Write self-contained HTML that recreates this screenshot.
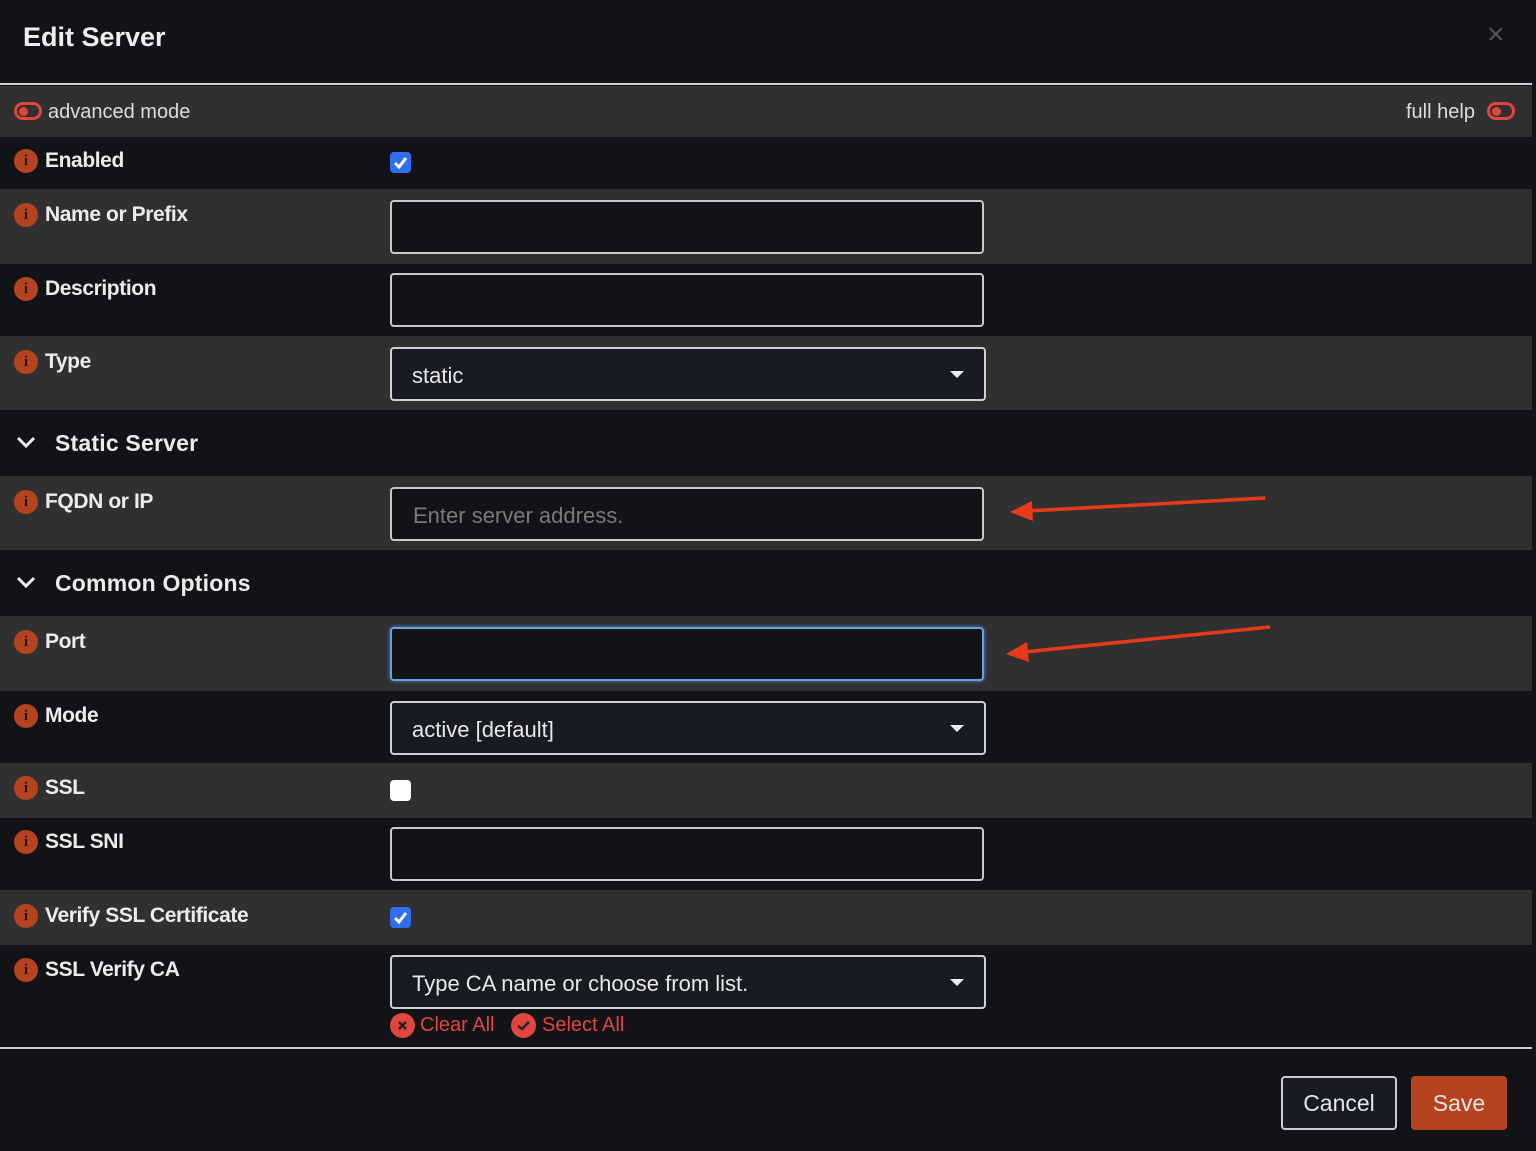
<!DOCTYPE html>
<html><head><meta charset="utf-8"><style>
*{box-sizing:border-box;margin:0;padding:0}
body{width:1536px;height:1151px;background:#121317;font-family:"Liberation Sans",sans-serif;color:#e6e6e6;position:relative;overflow:hidden}
.a{position:absolute}
.row{position:absolute;left:0;width:1532px}
.g{background:#303030}
.d{background:#121317}
.lbl{position:absolute;left:45px;font-size:21px;font-weight:bold;color:#ececec;letter-spacing:-0.4px;top:0}
.ic{position:absolute;left:14px;width:24px;height:24px;border-radius:50%;background:#b5431f;color:#2a1308;font:bold 15px "Liberation Serif",serif;text-align:center;line-height:24px}
.inp{position:absolute;left:390px;width:594px;height:54px;border:2px solid #c8c8c8;border-radius:4px;background:#121317}
.sel{position:absolute;left:390px;width:596px;height:54px;border:2px solid #d0d0d0;border-radius:4px;background:#181b22;font-size:22px;color:#e8e8e8;padding:14px 0 0 20px}
.sel:after{content:"";position:absolute;right:20px;top:22px;border-left:7px solid transparent;border-right:7px solid transparent;border-top:7px solid #eee}
.cb{position:absolute;left:390px;width:21px;height:21px;border-radius:4px;background:#2f6fed}
.cbw{background:#fff}
.sec{position:absolute;left:55px;font-size:23px;font-weight:bold;color:#ececec;letter-spacing:0.2px}
.tg{position:absolute;top:102px;width:28px;height:18px;border:3px solid #e0463e;border-radius:9px}
.tg div{position:absolute;left:2px;top:2px;width:9px;height:9px;border-radius:50%;background:#e0463e}
</style></head><body>
<div class="a" style="left:23px;top:22px;font-size:27px;font-weight:bold;color:#eee">Edit Server</div>
<div class="a" style="left:1487px;top:18px;font-size:30px;color:#555">×</div>
<div class="a" style="left:0;top:83px;width:1532px;height:2px;background:#ccc"></div>

<div class="row g" style="top:86px;height:51px"></div>
<div class="tg" style="left:14px"><div></div></div>
<div class="a" style="left:48px;top:101px;font-size:20px;color:#ddd">advanced mode</div>
<div class="a" style="left:1406px;top:101px;font-size:20px;color:#ddd">full help</div>
<div class="tg" style="left:1487px"><div></div></div>

<div class="row d" style="top:137px;height:52px"></div>
<div class="ic" style="top:149px">i</div><div class="lbl" style="top:149px">Enabled</div>
<div class="cb" style="top:152px"><svg width="21" height="21"><path d="M5 11 L9 15 L16 6" stroke="#fff" stroke-width="3" fill="none"/></svg></div>

<div class="row g" style="top:189px;height:75px"></div>
<div class="ic" style="top:203px">i</div><div class="lbl" style="top:203px">Name or Prefix</div>
<div class="inp" style="top:200px"></div>

<div class="row d" style="top:264px;height:72px"></div>
<div class="ic" style="top:277px">i</div><div class="lbl" style="top:277px">Description</div>
<div class="inp" style="top:273px"></div>

<div class="row g" style="top:336px;height:74px"></div>
<div class="ic" style="top:350px">i</div><div class="lbl" style="top:350px">Type</div>
<div class="sel" style="top:347px">static</div>

<div class="row d" style="top:410px;height:66px"></div>
<svg class="a" style="left:15px;top:434px" width="22" height="16"><path d="M3 4 L11 12 L19 4" stroke="#eee" stroke-width="3" fill="none"/></svg>
<div class="sec" style="top:430px">Static Server</div>

<div class="row g" style="top:476px;height:74px"></div>
<div class="ic" style="top:490px">i</div><div class="lbl" style="top:490px">FQDN or IP</div>
<div class="inp" style="top:487px;font-size:22px;color:#7a7a7a;padding:14px 0 0 21px">Enter server address.</div>

<div class="row d" style="top:550px;height:66px"></div>
<svg class="a" style="left:15px;top:574px" width="22" height="16"><path d="M3 4 L11 12 L19 4" stroke="#eee" stroke-width="3" fill="none"/></svg>
<div class="sec" style="top:570px">Common Options</div>

<div class="row g" style="top:616px;height:75px"></div>
<div class="ic" style="top:630px">i</div><div class="lbl" style="top:630px">Port</div>
<div class="inp" style="top:627px;border-color:#6aa0e0;box-shadow:0 0 4px #4a86d0"></div>

<div class="row d" style="top:691px;height:72px"></div>
<div class="ic" style="top:704px">i</div><div class="lbl" style="top:704px">Mode</div>
<div class="sel" style="top:701px">active [default]</div>

<div class="row g" style="top:763px;height:55px"></div>
<div class="ic" style="top:776px">i</div><div class="lbl" style="top:776px">SSL</div>
<div class="cb cbw" style="top:780px"></div>

<div class="row d" style="top:818px;height:72px"></div>
<div class="ic" style="top:830px">i</div><div class="lbl" style="top:830px">SSL SNI</div>
<div class="inp" style="top:827px"></div>

<div class="row g" style="top:890px;height:55px"></div>
<div class="ic" style="top:904px">i</div><div class="lbl" style="top:904px">Verify SSL Certificate</div>
<div class="cb" style="top:907px"><svg width="21" height="21"><path d="M5 11 L9 15 L16 6" stroke="#fff" stroke-width="3" fill="none"/></svg></div>

<div class="row d" style="top:945px;height:103px"></div>
<div class="ic" style="top:958px">i</div><div class="lbl" style="top:958px">SSL Verify CA</div>
<div class="sel" style="top:955px">Type CA name or choose from list.</div>
<div class="a" style="left:390px;top:1013px;width:25px;height:25px;border-radius:50%;background:#e0463e"><svg width="25" height="25"><path d="M9 9 L16 16 M16 9 L9 16" stroke="#222" stroke-width="2.5"/></svg></div>
<div class="a" style="left:420px;top:1014px;font-size:20px;color:#e0463e">Clear All</div>
<div class="a" style="left:511px;top:1013px;width:25px;height:25px;border-radius:50%;background:#e0463e"><svg width="25" height="25"><path d="M7 13 L11 16 L18 9" stroke="#222" stroke-width="2.5" fill="none"/></svg></div>
<div class="a" style="left:542px;top:1014px;font-size:20px;color:#e0463e">Select All</div>

<div class="a" style="left:0;top:1047px;width:1532px;height:2px;background:#ccc"></div>

<div class="a" style="left:1281px;top:1076px;width:116px;height:54px;border:2px solid #ccc;border-radius:4px;background:#181b22;font-size:23px;color:#e6e6e6;text-align:center;line-height:50px">Cancel</div>
<div class="a" style="left:1411px;top:1076px;width:96px;height:54px;border-radius:4px;background:#b5431f;font-size:23px;color:#f0e6e0;text-align:center;line-height:54px">Save</div>

<svg class="a" style="left:0;top:0" width="1536" height="1151">
<line x1="1265" y1="498" x2="1028" y2="511" stroke="#e8391c" stroke-width="3.5"/>
<polygon points="1010,512 1032,501 1033,521" fill="#e8391c"/>
<line x1="1270" y1="627" x2="1024" y2="652" stroke="#e8391c" stroke-width="3.5"/>
<polygon points="1006,654 1027,642 1029,662" fill="#e8391c"/>
</svg>
</body></html>
